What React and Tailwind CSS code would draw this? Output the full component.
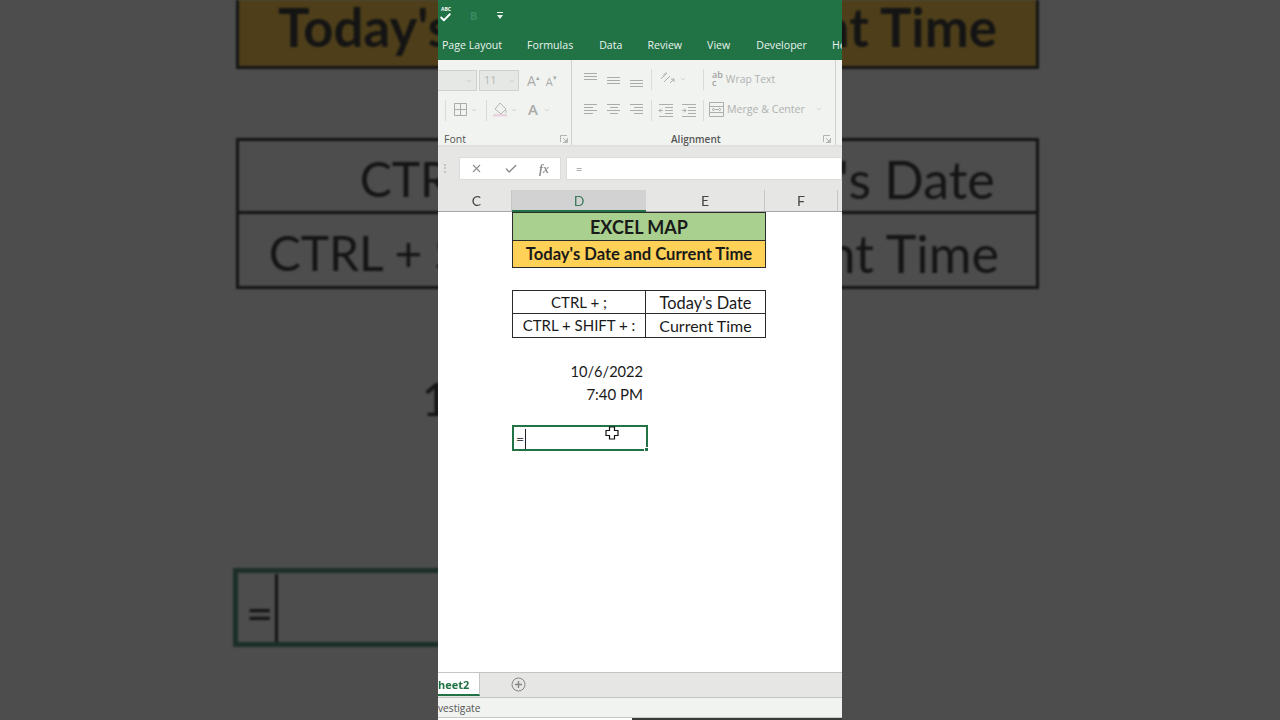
import { Check, ChevronDown, X } from 'lucide-react';

const uiFont = { fontFamily: '"Open Sans", "Noto Sans", sans-serif' };

function Lines({ rows, size = 16 }) {
  // rows: [x1, x2, y] in a 16 box
  return (
    <svg width={size} height={size} viewBox="0 0 16 16" stroke="#a9aca9" strokeWidth="1" fill="none">
      {rows.map(([a, b, y]) => (
        <path key={`${a}-${b}-${y}`} d={`M${a} ${y + 0.5}H${b}`} />
      ))}
    </svg>
  );
}

function Caret({ className = '' }) {
  return <ChevronDown size={8} strokeWidth={1.5} className={`text-[#b5b7b5] ${className}`} />;
}

function Sep({ className = '' }) {
  return <div className={`w-px h-[21px] bg-[#d9dbd8] ${className}`} />;
}

function Launcher() {
  return (
    <svg width="8" height="8" viewBox="0 0 8 8" fill="none" stroke="#b4b6b4" strokeWidth="1" className="mb-[2px]">
      <path d="M0.5 7V0.5H7M7.5 3V7.5H3M3 3L6.5 6.5M6.5 4.5V6.5H4.5" />
    </svg>
  );
}

function Backdrop() {
  return (
    <div
      className="absolute inset-0 overflow-hidden bg-[#4d4d4d] pl-[236px] text-[#141414] blur-[1px]"
      style={{ fontFamily: 'Lato, sans-serif' }}
    >
      <div className="-mt-4 w-[803px] h-[85px] border-[3px] border-[#141414] bg-[#4e3f1a] flex items-center justify-center text-[52.7px] font-bold">
        Today's Date and Current Time
      </div>
      <div className="mt-[69px] w-[803px] h-[151px] border-[3px] border-[#141414] grid grid-cols-[423px_1fr] grid-rows-2 text-center">
        <div className="border-r-[3px] border-b-[3px] border-[#141414] text-[48px] leading-[76px]">CTRL + ;</div>
        <div className="border-b-[3px] border-[#141414] text-[52px] leading-[76px]">Today's Date</div>
        <div className="border-r-[3px] border-[#141414] text-[48px] leading-[78px]">CTRL + SHIFT + :</div>
        <div className="text-[52px] leading-[78px]">Current Time</div>
      </div>
      <div className="mt-[80px] w-[412px] text-right text-[46px] leading-[60px] ml-[2px]">10/6/2022</div>
      <div className="mt-[139px] -ml-[3px] w-[428px] h-[79px] border-[5px] border-[#1c2f27] flex items-end">
        <span className="ml-2 text-[47px] leading-[60px]">=</span>
        <span className="ml-[2px] w-[3px] h-[68px] bg-[#141414]" />
      </div>
    </div>
  );
}

function QuickAccess() {
  return (
    <div className="h-[30px] pt-[2px] flex items-center text-white">
      <div className="w-[18px] ml-px h-[20px]">
        <span className="block text-[5px] font-bold leading-[6px] pl-[2px]">ABC</span>
        <Check size={13} strokeWidth={3.5} className="-mt-[1px]" />
      </div>
      <span className="ml-[13px] text-[11px] font-bold text-[#3b8a62]">B</span>
      <svg width="6" height="8" viewBox="0 0 6 8" className="ml-[20px]" fill="#e8f1ec">
        <rect x="0" y="0" width="6" height="1" />
        <path d="M0 3H6L3 7Z" />
      </svg>
    </div>
  );
}

function Tabs() {
  const tabs = [
    ['Page Layout', 'ml-1'],
    ['Formulas', 'ml-[25px]'],
    ['Data', 'ml-[26px]'],
    ['Review', 'ml-[25px]'],
    ['View', 'ml-[25px]'],
    ['Developer', 'ml-[26px]'],
    ['He', 'ml-[25px]'],
  ];
  return (
    <div className="h-[30px] flex items-center pt-[2px] text-[10.6px] text-[#eaf2ed] whitespace-nowrap">
      {tabs.map(([label, cls]) => (
        <span key={label} className={cls}>{label}</span>
      ))}
    </div>
  );
}

function FontGroup() {
  return (
    <div className="w-[134px] h-full shrink-0 border-r border-[#cfd1ce] flex flex-col">
      <div className="h-[31px] pt-[10px] flex items-start">
        <div className="w-[39px] h-[21px] bg-[#e6e8e5] border-y border-r border-[#cfd1ce] flex justify-end items-center pr-[3px]">
          <Caret />
        </div>
        <div className="ml-[2px] w-[40px] h-[21px] bg-[#e6e8e5] border border-[#cfd1ce] flex items-center justify-between pl-1 pr-[2px] text-[11px] text-[#b4b6b4]">
          11
          <Caret />
        </div>
        <span className="ml-[8px] mt-[3px] text-[14px] leading-[16px] text-[#a9aba9]">A</span>
        <span className="text-[7px] leading-[10px] mt-[3px] text-[#a9aba9]">▴</span>
        <span className="ml-[6px] mt-[5px] text-[11px] leading-[14px] text-[#a9aba9]">A</span>
        <span className="text-[7px] leading-[10px] mt-[3px] text-[#a9aba9]">▾</span>
      </div>
      <div className="h-[30px] pt-[9px] flex items-start">
        <Sep className="ml-[7px]" />
        <svg width="13" height="13" viewBox="0 0 13 13" fill="none" stroke="#a9aca9" strokeWidth="1" className="ml-[8px] mt-[3px]">
          <path d="M0.5 0.5H12.5V12.5H0.5ZM6.5 0.5V12.5M0.5 6.5H12.5" />
        </svg>
        <Caret className="ml-[3px] mt-[6px]" />
        <Sep className="ml-[8px]" />
        <svg width="15" height="15" viewBox="0 0 15 15" fill="none" stroke="#b5b7b5" strokeWidth="1" className="ml-[6px] mt-[2px]">
          <path d="M7 1L13 7L8 12L2 7ZM13 8V11" />
          <rect x="0" y="12" width="14" height="2.5" fill="#e9d3de" stroke="none" />
        </svg>
        <Caret className="ml-[2px] mt-[6px]" />
        <span className="ml-[10px] text-[15px] leading-[18px] font-semibold text-[#a9aba9]">A</span>
        <Caret className="ml-[5px] mt-[6px]" />
      </div>
      <div className="flex-1 flex items-end justify-between pl-[6px] pr-[3px]">
        <span className="text-[10.5px] leading-[12px] text-[#555755]">Font</span>
        <Launcher />
      </div>
    </div>
  );
}

function AlignmentGroup() {
  return (
    <div className="w-[264px] h-full shrink-0 border-r border-[#cfd1ce] flex flex-col">
      <div className="h-[31px] pt-[12px] pl-[11px] flex items-start">
        <Lines rows={[[1, 14, 1], [1, 14, 4], [1, 14, 7]]} />
        <div className="ml-[7px]"><Lines rows={[[1, 14, 5], [1, 14, 8], [1, 14, 11]]} /></div>
        <div className="ml-[7px] -mt-[1px]"><Lines rows={[[1, 14, 9], [1, 14, 12], [1, 14, 15]]} /></div>
        <Sep className="ml-[6px] -mt-[3px]" />
        <svg width="16" height="16" viewBox="0 0 16 16" fill="none" stroke="#adafad" strokeWidth="1" className="ml-[7px] -mt-[1px]">
          <path d="M2 8L8 2M5 11L11 5M7 1.5L4 4.5M11 12L15 8M15 8H12M15 8V11" />
        </svg>
        <Caret className="ml-[4px] mt-[3px]" />
        <Sep className="ml-[16px] -mt-[3px]" />
        <span className="ml-[8px] -mt-[1px] text-[9px] leading-[8px] text-[#a0a2a0] font-semibold">ab<br />c</span>
        <span className="ml-[3px] text-[10.4px] leading-[14px] text-[#b0b2b0]">Wrap Text</span>
      </div>
      <div className="h-[30px] pt-[9px] pl-[11px] flex items-start">
        <div className="mt-[2px]"><Lines rows={[[1, 14, 2], [1, 10, 5], [1, 14, 8], [1, 10, 11]]} /></div>
        <div className="ml-[7px] mt-[2px]"><Lines rows={[[1, 14, 2], [4, 12, 5], [1, 14, 8], [4, 12, 11]]} /></div>
        <div className="ml-[7px] mt-[2px]"><Lines rows={[[1, 14, 2], [5, 14, 5], [1, 14, 8], [5, 14, 11]]} /></div>
        <Sep className="ml-[6px]" />
        <svg width="16" height="14" viewBox="0 0 16 14" fill="none" stroke="#adafad" className="ml-[6px] mt-1">
          <path d="M1 0.5H15M7 3.5H15M7 6.5H15M7 9.5H15M1 12.5H15M5 6.5H1M3 4.5L1 6.5L3 8.5" />
        </svg>
        <svg width="16" height="14" viewBox="0 0 16 14" fill="none" stroke="#adafad" className="ml-[7px] mt-1">
          <path d="M1 0.5H15M7 3.5H15M7 6.5H15M7 9.5H15M1 12.5H15M1 6.5H5M3 4.5L5 6.5L3 8.5" />
        </svg>
        <Sep className="ml-[6px]" />
        <svg width="15" height="15" viewBox="0 0 15 15" fill="none" stroke="#adafad" className="ml-[5px] mt-[2px]">
          <path d="M0.5 0.5H14.5V14.5H0.5ZM0.5 4.5H14.5M0.5 10.5H14.5M5 7.5H10M3 7.5L5 6M3 7.5L5 9M12 7.5L10 6M12 7.5L10 9" />
        </svg>
        <span className="ml-[3px] mt-[2px] text-[10.6px] leading-[14px] text-[#b0b2b0] whitespace-nowrap">Merge & Center</span>
        <Caret className="ml-[10px] mt-[5px]" />
      </div>
      <div className="flex-1 flex items-end justify-between pr-[4px]">
        <span className="ml-[99px] text-[10px] leading-[12px] font-semibold text-[#555755]">Alignment</span>
        <Launcher />
      </div>
    </div>
  );
}

function FormulaBar() {
  return (
    <div className="h-[43px] bg-[#e6e7e5] pt-[10px] flex items-start">
      <div className="ml-[6px] mt-[7px] w-[2px] h-[9px] border-l-2 border-dotted border-[#c4c4c4]" />
      <div className="ml-[13px] w-[102px] h-[23px] bg-white border border-[#dcdcdc] flex items-center text-[#8e8e8e]">
        <X size={13} strokeWidth={2} className="ml-[10px]" />
        <Check size={14} strokeWidth={2.5} className="ml-[21px]" />
        <span className="ml-[21px] text-[12px] italic font-semibold" style={{ fontFamily: '"Liberation Serif", serif' }}>fx</span>
      </div>
      <div className="ml-[5px] flex-1 h-[23px] bg-white border border-[#dcdcdc] pl-[9px] text-[11px] leading-[21px] text-[#666]">=</div>
    </div>
  );
}

function ColumnHeaders() {
  return (
    <div className="h-[22px] flex bg-[#e6e7e5] border-b border-[#a8a8a8] text-[14px] leading-[21px] text-center text-[#444]" style={{ fontFamily: 'Lato, sans-serif' }}>
      <div className="w-[74px] border-r border-[#c6c6c6] pl-1">C</div>
      <div className="w-[134px] bg-[#d2d2d2] border-b-2 border-[#217346] text-[#3b7a5a] h-[22px]">D</div>
      <div className="w-[119px] border-r border-[#c6c6c6]">E</div>
      <div className="w-[73px] border-r border-[#c6c6c6]">F</div>
    </div>
  );
}

function Sheet() {
  return (
    <div className="relative flex-1 bg-white pl-[74px] text-[#1a1a1a]" style={{ fontFamily: 'Lato, sans-serif' }}>
      <div className="w-[254px] border border-[#2b2b2b] text-center font-bold">
        <div className="h-[28px] bg-[#a9d08e] border-b border-[#2b2b2b] text-[18px] leading-[28px]">EXCEL MAP</div>
        <div className="h-[26px] bg-[#ffd156] text-[16.6px] leading-[26px] whitespace-nowrap">Today's Date and Current Time</div>
      </div>
      <div className="mt-[22px] w-[254px] h-[48px] border border-[#2b2b2b] grid grid-cols-[133px_1fr] grid-rows-2 text-center">
        <div className="border-r border-b border-[#2b2b2b] text-[15px] leading-[23px]">CTRL + ;</div>
        <div className="border-b border-[#2b2b2b] text-[16.4px] leading-[23px]">Today's Date</div>
        <div className="border-r border-[#2b2b2b] text-[15px] leading-[23px]">CTRL + SHIFT + :</div>
        <div className="text-[16px] leading-[23px]">Current Time</div>
      </div>
      <div className="mt-[22px] w-[131px] text-right text-[14.6px] leading-[23px]">10/6/2022</div>
      <div className="w-[131px] text-right text-[15px] leading-[23px]">7:40 PM</div>
      <div className="relative mt-[19px] w-[136px] h-[26px] border-2 border-[#217346] flex items-end">
        <span className="ml-[2px] text-[14px] leading-[20px] text-[#444]">=</span>
        <span className="ml-[1px] w-px h-[20px] bg-[#222]" />
        <span className="absolute -right-[3px] -bottom-[3px] w-[5px] h-[5px] bg-[#217346] border border-white" />
      </div>
      {/* excel cell cursor */}
      <svg width="14" height="14" viewBox="0 0 14 14" className="absolute left-[167px] top-[214px]" fill="#fff" stroke="#111" strokeWidth="1.2">
        <path d="M4.5 1H9.5V4.5H13V9.5H9.5V13H4.5V9.5H1V4.5H4.5Z" />
      </svg>
    </div>
  );
}

function SheetTabs() {
  return (
    <div className="h-[26px] bg-[#e6e7e5] border-y border-[#c4c6c4] flex items-start">
      <div className="w-[42px] h-[23px] bg-white border-b-2 border-r border-r-[#c4c6c4] border-b-[#217346] text-[11px] font-bold leading-[24px] text-[#217346]">heet2</div>
      <svg width="15" height="15" viewBox="0 0 15 15" fill="none" stroke="#858785" strokeWidth="1" className="ml-[31px] mt-[4px]">
        <circle cx="7.5" cy="7.5" r="6.5" />
        <path d="M7.5 4V11M4 7.5H11" strokeWidth="1.4" />
      </svg>
    </div>
  );
}

export default function App() {
  return (
    <div className="relative w-[1280px] h-[720px] overflow-hidden bg-[#4d4d4d]">
      <Backdrop />
      <div className="relative mx-auto w-[404px] h-[720px] flex flex-col overflow-hidden blur-[0.3px]" style={uiFont}>
        <div className="bg-[#217346]">
          <QuickAccess />
          <Tabs />
        </div>
        <div className="h-[87px] bg-[#f1f3f0] border-b-2 border-[#e0e1df] flex">
          <FontGroup />
          <AlignmentGroup />
        </div>
        <FormulaBar />
        <ColumnHeaders />
        <Sheet />
        <SheetTabs />
        <div className="h-[20px] bg-[#f1f3f0] border-b border-[#c9cbc9] text-[10.2px] leading-[21px] text-[#555]">vestigate</div>
        <div className="h-[2px] flex">
          <div className="w-[194px] bg-white" />
          <div className="flex-1 bg-[#3a3a3a]" />
        </div>
      </div>
    </div>
  );
}
